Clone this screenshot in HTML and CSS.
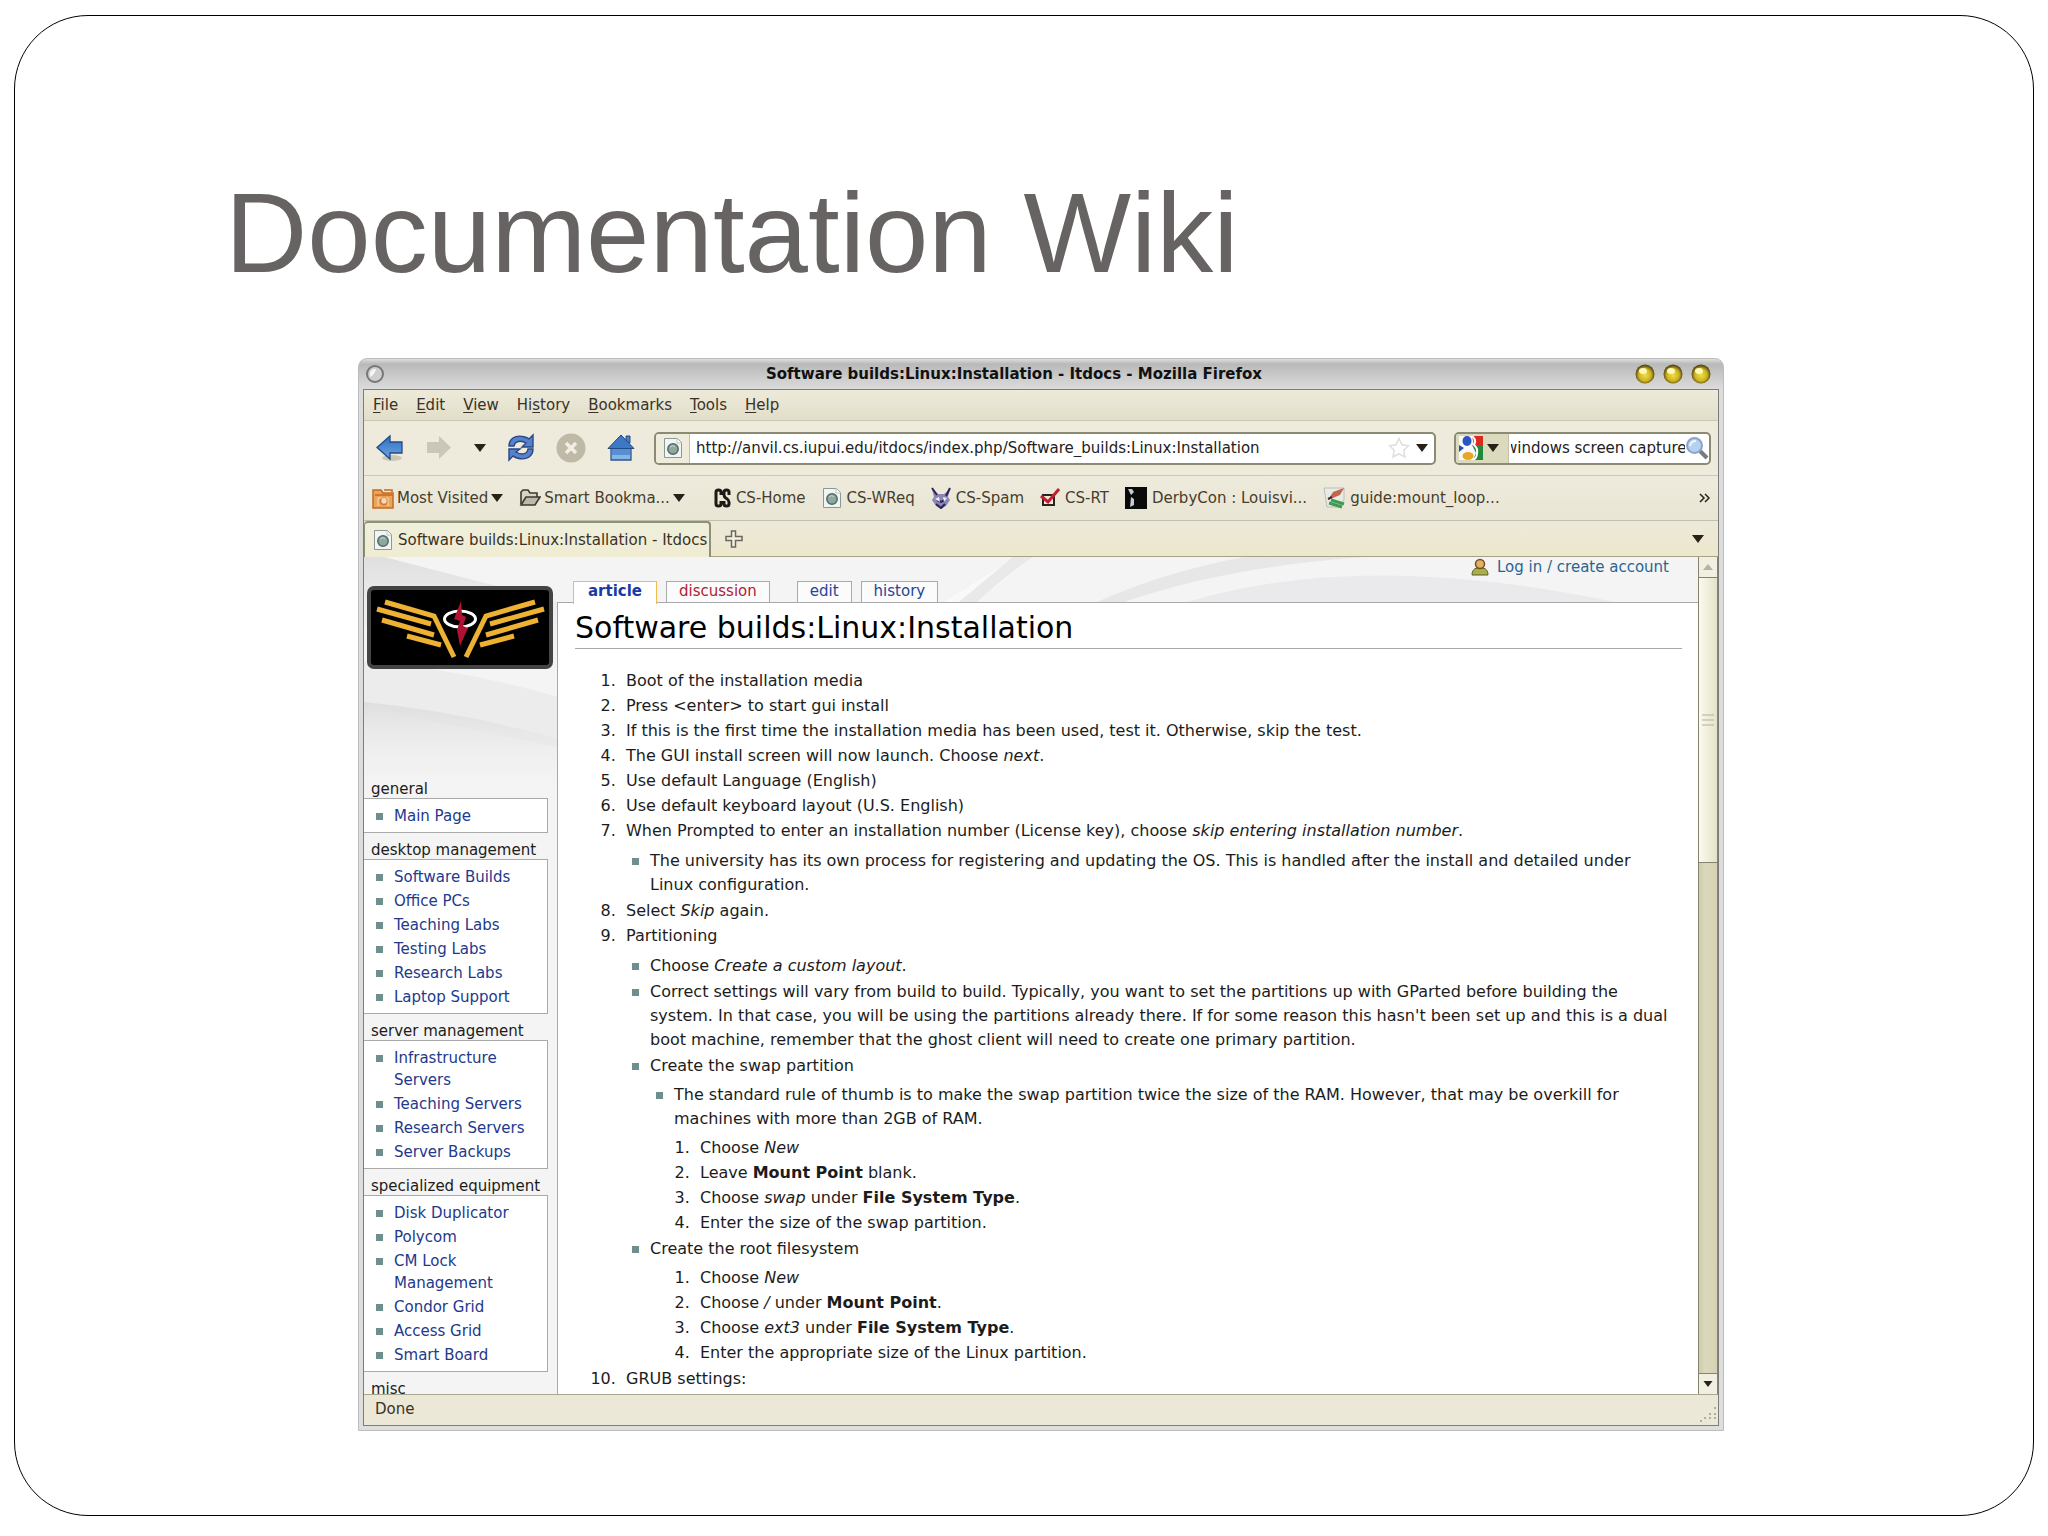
FILE: index.html
```html
<!DOCTYPE html>
<html lang="en">
<head>
<meta charset="utf-8">
<title>Documentation Wiki</title>
<link rel="stylesheet" href="styles.css">
</head>
<body>
<svg class="defs" aria-hidden="true">
  <defs>
    <linearGradient id="blue" x1="0" y1="0" x2="0" y2="1"><stop offset="0" stop-color="#2f6fc4"/><stop offset="1" stop-color="#6ea4dd"/></linearGradient>
    <radialGradient id="gold" cx=".5" cy=".55" r=".5"><stop offset="0" stop-color="#f0e048"/><stop offset=".65" stop-color="#ccb420"/><stop offset="1" stop-color="#5a4a14"/></radialGradient>
    <linearGradient id="fadeDown" x1="0" y1="0" x2="0" y2="1"><stop offset="0" stop-color="#d6d6d8"/><stop offset="1" stop-color="#f2f2f2" stop-opacity="0"/></linearGradient>
    <symbol id="page" viewBox="0 0 20 22"><path d="M1.5 1.5h13l4 4v15h-17z" fill="#f1f5f3" stroke="#8b9894"/><path d="M14 1.5v4.500h4.500" fill="#fff" stroke="#b9c6c2"/><circle cx="10" cy="12" r="5.200" fill="#8fa79c" stroke="#4f6a68" stroke-width="1.500"/><path d="M7 10q3-3 5 0" stroke="#c7d8cf" fill="none"/></symbol>
    <symbol id="caret" viewBox="0 0 12 8"><path d="M0 0h12L6 8z" fill="#2a2018"/></symbol>
  </defs>
</svg>
<main class="slide">
  <h1 class="slide-title">Documentation Wiki</h1>
  <section class="window">
    <header class="titlebar">
      <button class="orb" aria-label="Window menu"><svg width="20" height="20" viewBox="0 0 20 20"><circle cx="10" cy="10" r="8" fill="#cfcfcf" stroke="#777" stroke-width="2"/><path d="M5 10a5 5 0 0 1 6-5q-1 5-6 8z" fill="#f7f7f7"/></svg></button>
      <h2 class="window-name">Software builds:Linux:Installation - Itdocs - Mozilla Firefox</h2>
      <div class="controls">
        <button class="orb" aria-label="Minimize"><svg width="20" height="20" viewBox="0 0 20 20"><circle cx="10" cy="10" r="9.500" fill="url(#gold)"/><ellipse cx="8" cy="7" rx="4" ry="3" fill="#fff9b8"/></svg></button>
        <button class="orb" aria-label="Maximize"><svg width="20" height="20" viewBox="0 0 20 20"><circle cx="10" cy="10" r="9.500" fill="url(#gold)"/><ellipse cx="8" cy="7" rx="4" ry="3" fill="#fff9b8"/></svg></button>
        <button class="orb" aria-label="Close"><svg width="20" height="20" viewBox="0 0 20 20"><circle cx="10" cy="10" r="9.500" fill="url(#gold)"/><ellipse cx="8" cy="7" rx="4" ry="3" fill="#fff9b8"/></svg></button>
      </div>
    </header>
    <div class="client">
      <nav class="menubar">
        <button><u>F</u>ile</button><button><u>E</u>dit</button><button><u>V</u>iew</button><button>Hi<u>s</u>tory</button><button><u>B</u>ookmarks</button><button><u>T</u>ools</button><button><u>H</u>elp</button>
      </nav>
      <div class="toolbar">
        <div class="tools">
          <button class="tool" aria-label="Back"><svg width="30" height="30" viewBox="0 0 30 30"><ellipse cx="18" cy="25" rx="10" ry="3" fill="#cbc7b8"/><path d="M3 14.500 16 3v6h12v11H16v6z" fill="url(#blue)" stroke="#244a86" stroke-width="1.300"/></svg></button>
          <button class="tool" aria-label="Forward"><svg width="30" height="30" viewBox="0 0 30 30"><path d="M27 14.500 15 3v6H3v11h12v6z" fill="#c9c6ba"/></svg></button>
          <button class="tool" aria-label="Recent pages"><svg width="12" height="8"><use href="#caret" width="12" height="8"/></svg></button>
          <button class="tool" aria-label="Reload"><svg width="30" height="30" viewBox="0 0 30 30"><path d="M3 13C3 6 9 1 19 4c2 .500 3 1.500 4 2l4-4v12H16l4-4C15 7 9 8 8 13z" fill="#5582cb" stroke="#2a4684" stroke-width="1.400"/><path d="M27 16c0 7-6 12-16 9-2-.500-3-1.500-4-2l-4 4V16h11l-4 3c5 3 11 3 12-3z" fill="#5582cb" stroke="#2a4684" stroke-width="1.400"/></svg></button>
          <button class="tool" aria-label="Stop"><svg width="30" height="30" viewBox="0 0 30 30"><circle cx="15" cy="15" r="14.500" fill="#bfb9a8"/><path d="m10 10 10 10M20 10 10 20" stroke="#f1eee3" stroke-width="3.500"/></svg></button>
          <button class="tool" aria-label="Home"><svg width="30" height="30" viewBox="0 0 30 30"><path d="M20 3h4v7h-4z" fill="#4c7fc0" stroke="#244a86"/><path d="M5 15h20v12H5z" fill="#86b4e4" stroke="#2d5793" stroke-width="1.300"/><path d="M15 2 28 15.500H2z" fill="#3d78c4" stroke="#244a86"/><path d="M6 16h18v6H6z" fill="#5590d4"/></svg></button>
        </div>
        <form class="field address">
          <span class="site"><svg width="20" height="22"><use href="#page" width="20" height="22"/></svg></span>
          <input aria-label="Address" value="http://anvil.cs.iupui.edu/itdocs/index.php/Software_builds:Linux:Installation">
          <button type="button" class="tool" aria-label="Bookmark this page"><svg width="22" height="22" viewBox="0 0 22 22"><path d="m11 1.500 3 6.200 6.500 1-4.800 4.600 1.200 6.700-5.900-3.200L5 20l1.200-6.700L1.500 8.700l6.500-1z" fill="#fff" stroke="#dedede" stroke-width="1.500"/></svg></button>
          <button type="button" class="tool" aria-label="Show history"><svg width="12" height="8"><use href="#caret" width="12" height="8"/></svg></button>
        </form>
        <form class="field search">
          <button type="button" class="engine" aria-label="Search engine"><svg width="24" height="24" viewBox="0 0 24 24"><path d="M0 0h24v24H0z" fill="#f8f8f8"/><path d="M13 0h11v9H15z" fill="#dd2a1f"/><path d="M13 9h11v15H14l3-7z" fill="#208a3c"/><path d="M0 9l5 3-5 4z" fill="#2350b8"/><ellipse cx="8" cy="5" rx="4.500" ry="5" fill="#2a53c4"/><ellipse cx="9" cy="20" rx="5.500" ry="4" fill="#e8a624"/><path d="M13 0q5 4 2 9 4 3 3 8 0 5-4 7" fill="none" stroke="#fff" stroke-width="2"/></svg><svg width="12" height="8"><use href="#caret" width="12" height="8"/></svg></button>
          <input aria-label="Search" value="windows screen capture">
          <button type="button" class="tool" aria-label="Search"><svg width="24" height="24" viewBox="0 0 24 24"><path d="m14 14 8 8" stroke="#777b80" stroke-width="4"/><circle cx="9.500" cy="9.500" r="7.500" fill="#b5d1f0" stroke="#8da4c8" stroke-width="2"/><path d="M5 10q1-5 6-5" stroke="#eef6ff" stroke-width="2" fill="none"/></svg></button>
        </form>
      </div>
      <nav class="bookmarks">
        <button class="drop"><svg width="22" height="22" viewBox="0 0 22 22"><path d="M1 20V3h8l2 3h10v15H1z" fill="#eba45c" stroke="#c56a20" stroke-width="1.500"/><path d="M3 8h17M12 3h8v2" stroke="#c56a20" stroke-width="1.500" fill="none"/><circle cx="12" cy="14" r="3.500" fill="#f7d9b4" stroke="#cf7428" stroke-width="1.500"/><path d="M6 19v-8h10v8" fill="none" stroke="#f7d9b4"/></svg>Most Visited<svg width="12" height="8"><use href="#caret" width="12" height="8"/></svg></button>
        <button class="drop"><svg width="22" height="22" viewBox="0 0 22 22"><path d="M2 17V5l2-2h5l2 3h7v4" fill="#d8d4c4" stroke="#3c382e" stroke-width="1.600"/><path d="M2 18 7 10h14l-5 8z" fill="#bdb9aa" stroke="#3c382e" stroke-width="1.600"/></svg>Smart Bookma...<svg width="12" height="8"><use href="#caret" width="12" height="8"/></svg></button>
        <a href="#"><svg width="18" height="22" viewBox="0 0 18 22"><path d="M8 8V5q0-2-2.500-2T3 5v12q0 2 2.500 2T8 17v-3M16 8V5q0-2-2.500-2T11 5v3q0 2 2.500 3.500T16 15v2q0 2-2.500 2T11 17v-3" fill="none" stroke="#1d1a16" stroke-width="3"/></svg>CS-Home</a>
        <a href="#"><svg width="20" height="22"><use href="#page" width="20" height="22"/></svg>CS-WReq</a>
        <a href="#"><svg width="20" height="22" viewBox="0 0 20 22"><path d="m1 2 6 5h6l6-5-2 8 2 3-4 6-5 3-5-3-4-6 2-3z" fill="#8c86b8"/><path d="m1 1 5 7M19 1l-4 8M6 13l4 2 4-2M5 17l5 4 4-4" stroke="#2b2350" stroke-width="2" fill="none"/><path d="m4 12 4-2 1 5zM12 10l4 1-3 4z" fill="#eceaf6"/></svg>CS-Spam</a>
        <a href="#"><svg width="20" height="20" viewBox="0 0 20 20"><path d="M3 7h11v10H3z" fill="#f3e6df" stroke="#2b2222" stroke-width="2"/><path d="m1 8 7 6L19 1" fill="none" stroke="#c41f2c" stroke-width="3"/></svg>CS-RT</a>
        <a href="#"><svg width="22" height="22" viewBox="0 0 22 22"><path d="M0 0h22v22H0z" fill="#0a0a0a"/><path d="M3 2h4l2 3-3 3zM6 10l3 2v6l-4 2z" fill="#c4ccd0"/></svg>DerbyCon : Louisvi...</a>
        <a href="#"><svg width="22" height="22" viewBox="0 0 22 22"><path d="M1 1h20v12l-5 7H4z" fill="#e9ece6" stroke="#b8beb4"/><path d="m5 13 5-8 11-4-4 7z" fill="#c2664e"/><path d="m6 16 13 4M8 13l13 4" stroke="#3f9a52" stroke-width="3"/><path d="m5 12 4-2" stroke="#333" stroke-width="2"/></svg>guide:mount_loop...</a>
        <button class="more" aria-label="More bookmarks"><svg width="11" height="10" viewBox="0 0 11 10"><path d="m1 1 4 4-4 4M6 1l4 4-4 4" fill="none" stroke="#2a2018" stroke-width="1.500"/></svg></button>
      </nav>
      <div class="tabstrip">
        <button class="tab"><svg width="20" height="22"><use href="#page" width="20" height="22"/></svg>Software builds:Linux:Installation - Itdocs</button>
        <button class="tool add" aria-label="New tab"><svg width="18" height="18" viewBox="0 0 18 18"><path d="M6.500 1h4v5.500H17v4h-6.500V17h-4v-6.500H1v-4h5.500z" fill="#f4f1e4" stroke="#6b675c" stroke-width="1.500"/></svg></button>
        <button class="tool list" aria-label="List all tabs"><svg width="12" height="8"><use href="#caret" width="12" height="8"/></svg></button>
      </div>
      <div class="viewport">
        <div class="page">
          <svg class="swoosh" viewBox="0 0 1334 300" width="1334" height="300" aria-hidden="true">
            <path d="M20 0 195 45V110L0 70V0z" fill="url(#fadeDown)"/>
            <path d="M0 105Q100 112 194 140V190L0 150z" fill="#e4e4e6" opacity=".7"/>
            <path d="M0 145Q100 155 194 182V235H0z" fill="url(#fadeDown)"/>
            <path d="M580 45 652 0h17l-56 45z" fill="#fcfcfc"/>
            <path d="M613 45Q640 20 669 0h-20L595 45z" fill="#dedee0" opacity=".8"/>
            <path d="M733 45Q800 15 880 0h120Q860 10 760 45z" fill="#e2e2e4"/>
            <path d="M823 45Q1000-8 1250 45z" fill="#e7e7e9"/>
          </svg>
          <aside class="sidebar">
            <a class="logo" href="#" aria-label="Main Page"><svg viewBox="0 0 186 83" width="186" height="83"><rect x="2" y="2" width="182" height="79" rx="5" fill="#000" stroke="#444" stroke-width="4"/><g fill="none" stroke="#edb233" stroke-width="5"><path d="m18 16 49 14 20 41M10 23l54 15M15 34l52 15M40 50l34 9"/><path d="m168 16-49 14-20 41M177 23l-54 15M171 34l-52 15M147 50l-34 9"/></g><ellipse cx="93" cy="33" rx="15.500" ry="8" fill="none" stroke="#fff" stroke-width="3"/><path d="m94 15-7 18 6 2-3 9 3 16 8-18-5-2 3-9-4-2z" fill="#b01332"/></svg></a>
            <h3>general</h3>
            <ul><li><a href="#">Main Page</a></li></ul>
            <h3>desktop management</h3>
            <ul><li><a href="#">Software Builds</a></li><li><a href="#">Office PCs</a></li><li><a href="#">Teaching Labs</a></li><li><a href="#">Testing Labs</a></li><li><a href="#">Research Labs</a></li><li><a href="#">Laptop Support</a></li></ul>
            <h3>server management</h3>
            <ul><li><a href="#">Infrastructure Servers</a></li><li><a href="#">Teaching Servers</a></li><li><a href="#">Research Servers</a></li><li><a href="#">Server Backups</a></li></ul>
            <h3>specialized equipment</h3>
            <ul><li><a href="#">Disk Duplicator</a></li><li><a href="#">Polycom</a></li><li><a href="#">CM Lock Management</a></li><li><a href="#">Condor Grid</a></li><li><a href="#">Access Grid</a></li><li><a href="#">Smart Board</a></li></ul>
            <h3>misc</h3>
          </aside>
          <div class="main">
            <div class="personal"><svg width="18" height="18" viewBox="0 0 18 18"><path d="M1 17q0-6 5-7h6q5 1 5 7z" fill="#a9b04a" stroke="#5d5a2c"/><circle cx="9" cy="6" r="4.500" fill="#e0b45c" stroke="#7b4a2a" stroke-width="1.500"/></svg><a href="#">Log in / create account</a></div>
            <nav class="views"><a class="current" href="#">article</a><a class="missing" href="#">discussion</a><a class="apart" href="#">edit</a><a href="#">history</a></nav>
            <article class="content">
              <h2>Software builds:Linux:Installation</h2>
              <ol class="steps">
                <li>Boot of the installation media</li>
                <li>Press &lt;enter&gt; to start gui install</li>
                <li>If this is the first time the installation media has been used, test it. Otherwise, skip the test.</li>
                <li>The GUI install screen will now launch. Choose <i>next</i>.</li>
                <li>Use default Language (English)</li>
                <li>Use default keyboard layout (U.S. English)</li>
                <li>When Prompted to enter an installation number (License key), choose <i>skip entering installation number</i>.
                  <ul><li>The university has its own process for registering and updating the OS. This is handled after the install and detailed under Linux configuration.</li></ul></li>
                <li>Select <i>Skip</i> again.</li>
                <li>Partitioning
                  <ul>
                    <li>Choose <i>Create a custom layout</i>.</li>
                    <li>Correct settings will vary from build to build. Typically, you want to set the partitions up with GParted before building the system. In that case, you will be using the partitions already there. If for some reason this hasn't been set up and this is a dual boot machine, remember that the ghost client will need to create one primary partition.</li>
                    <li>Create the swap partition
                      <ul><li>The standard rule of thumb is to make the swap partition twice the size of the RAM. However, that may be overkill for machines with more than 2GB of RAM.</li></ul>
                      <ol>
                        <li>Choose <i>New</i></li>
                        <li>Leave <b>Mount Point</b> blank.</li>
                        <li>Choose <i>swap</i> under <b>File System Type</b>.</li>
                        <li>Enter the size of the swap partition.</li>
                      </ol></li>
                    <li>Create the root filesystem
                      <ol>
                        <li>Choose <i>New</i></li>
                        <li>Choose <i>/</i> under <b>Mount Point</b>.</li>
                        <li>Choose <i>ext3</i> under <b>File System Type</b>.</li>
                        <li>Enter the appropriate size of the Linux partition.</li>
                      </ol></li>
                  </ul></li>
                <li>GRUB settings:</li>
              </ol>
            </article>
          </div>
        </div>
        <div class="scrollbar">
          <button aria-label="Scroll up"><svg width="10" height="6" viewBox="0 0 10 6"><path d="m0 6 5-6 5 6z" fill="#b5b2a0"/></svg></button>
          <div class="thumb"><svg width="12" height="12" viewBox="0 0 12 12"><path d="M0 1h12M0 6h12M0 11h12" stroke="#b4b199"/></svg></div>
          <div class="trough"></div>
          <button aria-label="Scroll down"><svg width="10" height="6"><use href="#caret" width="10" height="6"/></svg></button>
        </div>
      </div>
      <footer class="status"><span>Done</span><svg width="16" height="16" viewBox="0 0 16 16"><path d="M14 2h2M9 8h2M14 8h2M9 12h2M14 12h2M4 12h2M0 15h2" stroke="#b3ae98" stroke-width="2"/></svg></footer>
    </div>
  </section>
</main>
</body>
</html>
```
FILE: styles.css
```css
* { box-sizing: border-box; }

body {
  margin: 0;
  height: 100vh;
  padding: 15px 14px 20px;
  display: flex;
  background: #fff;
  color: #1c1c1c;
  font: 15px/18px "DejaVu Sans", sans-serif;
}

button, input {
  font: inherit;
  color: inherit;
  border: 0;
  padding: 0;
  margin: 0;
  background: none;
}

a { color: #22398c; text-decoration: none; }
svg { display: block; flex: none; }
.defs { position: absolute; width: 0; height: 0; }

/* Slide */
.slide {
  flex: 1;
  min-width: 0;
  display: flex;
  flex-direction: column;
  border: 1px solid #000;
  border-radius: 74px;
  padding: 153px 309px 84px 343px;
}

.slide-title {
  margin: 0 0 61px -133px;
  font: 114px/128px "Liberation Sans", sans-serif;
  color: #666362;
}

/* Browser window */
.window {
  flex: 1;
  min-height: 0;
  display: flex;
  flex-direction: column;
  padding: 0 4px 4px;
  border: 1px solid #bdbdbd;
  border-radius: 9px 9px 0 0;
  background: linear-gradient(#dedede 0, #b9b9b9 5px, #dcdcdc 30px, #dedede);
}

.titlebar {
  display: grid;
  grid-template-columns: 80px 1fr 80px;
  align-items: center;
  height: 30px;
  padding: 0 8px 0 2px;
}

.window-name {
  margin: 0;
  padding-right: 48px;
  text-align: center;
  font-size: 15px;
  color: #111;
}

.controls { display: flex; justify-content: flex-end; gap: 8px; }

.client {
  flex: 1;
  min-height: 0;
  display: flex;
  flex-direction: column;
  border: 1px solid #7d7d78;
  background: #ede9da;
}

.menubar {
  display: flex;
  gap: 18px;
  height: 31px;
  padding: 0 9px;
  border-bottom: 1px solid #cdc8b4;
  background: linear-gradient(#edeadb, #e2dec9);
  color: #3a3226;
}

.menubar u { text-underline-offset: 2px; }

.toolbar {
  display: flex;
  align-items: center;
  gap: 18px;
  height: 55px;
  padding: 0 7px 0 10px;
  border-bottom: 1px solid #cdc8b4;
  background: #efebdc;
}

.tools { display: flex; align-items: center; gap: 20px; }

.field {
  display: flex;
  align-items: center;
  height: 33px;
  border: 2px solid #8b8b74;
  border-radius: 5px;
  background: #fff;
  overflow: hidden;
}

.field input { flex: 1; min-width: 0; height: 28px; outline: 0; color: #222; }
.address { flex: 1; gap: 6px; padding-right: 6px; }

.site {
  display: grid;
  place-items: center;
  width: 34px;
  height: 100%;
  border-right: 1px solid #c4bfa6;
  background: #efecdc;
}

.search { width: 257px; }
.search input { text-indent: -6px; }

.engine {
  display: flex;
  align-items: center;
  gap: 4px;
  width: 53px;
  height: 100%;
  padding-left: 3px;
  margin-right: 2px;
  border-right: 1px solid #c4bfa6;
  background: #dbdabd;
}

.bookmarks {
  display: flex;
  align-items: center;
  gap: 16px;
  height: 45px;
  padding: 0 8px;
  border-bottom: 1px solid #c3bea8;
  background: linear-gradient(#efebdc, #e9e5d5);
}

.bookmarks a, .bookmarks button {
  display: flex;
  align-items: center;
  gap: 5px;
  color: #463d2c;
  white-space: nowrap;
}

.bookmarks .drop { gap: 3px; }
.bookmarks .drop + a { margin-left: 12px; }
.bookmarks .more { margin-left: auto; }

.tabstrip {
  display: flex;
  align-items: center;
  gap: 14px;
  height: 36px;
  padding-right: 14px;
  background: linear-gradient(#ede9da, #ece8cc);
  border-bottom: 1px solid #a5a285;
}

.tab {
  display: flex;
  align-items: center;
  gap: 5px;
  height: 36px;
  width: 347px;
  padding-left: 8px;
  border: solid #8d9277;
  border-width: 2px 2px 0 1px;
  border-radius: 4px 4px 0 0;
  background: linear-gradient(#eeefdc, #f0ecd2);
  color: #3a3226;
  white-space: nowrap;
}

.tabstrip .list { margin-left: auto; }

/* Wiki page */
.viewport { flex: 1; min-height: 0; display: flex; }

.page {
  position: relative;
  flex: 1;
  min-width: 0;
  display: grid;
  grid-template-columns: 193px 1fr;
  overflow: hidden;
  background: #f4f4f4;
}

.swoosh { position: absolute; top: 0; left: 0; opacity: .7; }
.sidebar, .main { position: relative; min-width: 0; }
.sidebar { padding-top: 29px; }
.logo { display: block; margin: 0 0 103px 3px; }

.sidebar h3 {
  margin: 0;
  padding: 8px 0 0 7px;
  font-size: 15px;
  font-weight: 400;
  white-space: nowrap;
}

.sidebar ul {
  margin: 0 9px 0 0;
  padding: 6px 8px 3px 12px;
  border: 1px solid #a9a9a9;
  border-left: 0;
  background: #fff;
  list-style: none;
  line-height: 22px;
}

.sidebar li {
  margin-bottom: 2px;
  padding-left: 18px;
  background: linear-gradient(#6f8f8f, #6f8f8f) 0 8px / 7px 7px no-repeat;
}

.main { display: flex; flex-direction: column; }

.personal {
  display: flex;
  justify-content: flex-end;
  align-items: center;
  gap: 8px;
  height: 24px;
  padding: 0 29px 5px 0;
}

.personal a { color: #2a6590; }

.views { display: flex; padding-left: 16px; gap: 9px; height: 21px; }

.views a {
  height: 21px;
  padding: 0 12px;
  border: 1px solid #a9a9a9;
  border-bottom: 0;
  background: #fbfbfb;
  color: #25459a;
}

.views .current {
  position: relative;
  height: 23px;
  padding: 0 14px;
  border-color: #f0bc4c;
  background: #fff;
  font-weight: 700;
  color: #1a3aa8;
}

.views .missing { color: #ae2236; }
.views .apart { margin-left: 18px; }

.content {
  flex: 1;
  padding: 7px 16px 0 17px;
  border: solid #a9a9a9;
  border-width: 1px 0 0 1px;
  background: #fff;
  font-size: 16px;
  line-height: 24px;
}

.content h2 {
  margin: 0 0 20px;
  padding-bottom: 2px;
  border-bottom: 1px solid #a9a9a9;
  font-size: 30px;
  font-weight: 400;
  line-height: 36px;
  color: #000;
}

@counter-style spaced {
  system: extends decimal;
  suffix: ".\a0\a0";
}

.content ol { margin: 0; padding: 0 0 0 51px; list-style: spaced; }
.content .steps { padding-right: 9px; }
.content ul { margin: 6px 0 0; padding: 0 0 0 6px; list-style: none; }
.content li { margin-bottom: 1px; }

.content ul > li {
  margin-bottom: 2px;
  padding-left: 18px;
  background: linear-gradient(#6f8f8f, #6f8f8f) 0 9px / 7px 7px no-repeat;
}

.content li ul ul, .content li ol { margin-top: 5px; }
.content li ol { padding-left: 50px; }

/* Scrollbar and status bar */
.scrollbar {
  display: flex;
  flex-direction: column;
  width: 20px;
  border: solid #85836c;
  border-width: 0 1px;
}

.scrollbar button {
  display: grid;
  place-items: center;
  height: 20px;
  background: #f1efe2;
}

.thumb {
  flex: 285;
  display: grid;
  place-items: center;
  border: solid #85836c;
  border-width: 1px 0;
  background: linear-gradient(90deg, #fafaee, #e4e2cb);
}

.trough { flex: 511; border-bottom: 1px solid #85836c; background: linear-gradient(90deg, #c9ceb0, #dcd8bb 6px, #d6d2b4); }

.status {
  display: flex;
  justify-content: space-between;
  align-items: flex-end;
  height: 31px;
  padding: 0 2px 3px 11px;
  border-top: 1px solid #aaa78f;
  background: #ece8d8;
  color: #3a3226;
}

.status span { padding-bottom: 4px; }
```
